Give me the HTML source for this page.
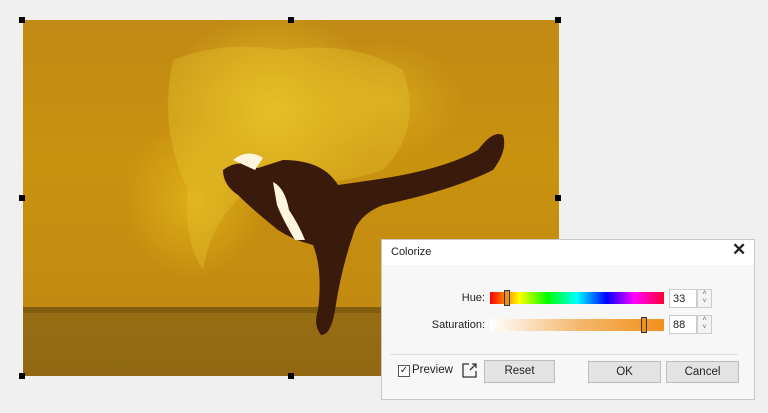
<!DOCTYPE html>
<html><head><style>
body{margin:0;width:768px;height:413px;background:#f0f0f0;position:relative;overflow:hidden;font-family:"Liberation Sans",sans-serif;}
.h{position:absolute;width:6px;height:6px;background:#000;}
#img{position:absolute;left:23px;top:20px;width:536px;height:356px;overflow:hidden;
background:
radial-gradient(ellipse 110px 100px at 250px 90px,rgba(240,205,40,.75),rgba(240,205,40,0)),
radial-gradient(ellipse 70px 80px at 170px 180px,rgba(235,195,30,.6),rgba(235,195,30,0)),
radial-gradient(ellipse 80px 60px at 360px 80px,rgba(230,190,35,.5),rgba(230,190,35,0)),
linear-gradient(180deg,#c08a14 0%,#c9920f 40%,#c28a10 80%,#a87410 100%);}
.dlg{position:absolute;left:381px;top:239px;width:372px;height:159px;background:#f7f7f7;border:1px solid #c8c8c8;font-size:11px;color:#222;}
.abs{position:absolute;}
.btn{position:absolute;background:#e3e3e3;border:1px solid #bdbdbd;text-align:center;line-height:20px;font-size:11.5px;}
.inp{position:absolute;background:#fff;border:1px solid #ccc;width:28px;height:19px;line-height:19px;padding-left:3px;box-sizing:border-box;font-size:11px;}
.spin{position:absolute;width:15px;height:19px;border:1px solid #ccc;background:#f3f3f3;box-sizing:border-box;font-size:7px;text-align:center;line-height:8px;color:#666;}
</style></head><body>
<div id="img">
<svg width="536" height="356" style="position:absolute;left:0;top:0">
<rect x="0" y="287" width="536" height="69" fill="#8a6414" opacity=".75"/>
<rect x="0" y="287" width="536" height="6" fill="#6b4d0c" opacity=".5"/>
<path d="M150 40 Q200 20 260 30 Q330 20 380 50 Q400 110 360 150 Q300 170 240 160 Q190 190 180 250 Q160 220 165 170 Q135 110 150 40Z" fill="#e8c630" opacity=".35"/>
<path d="M200 150 Q215 138 235 148 L260 140 Q300 140 315 165 L350 160 Q420 150 455 130 Q470 110 480 115 Q485 130 470 150 Q430 170 360 185 Q335 195 330 215 Q318 250 312 290 Q308 315 298 315 Q290 305 295 290 Q300 250 290 225 Q270 220 255 210 Q230 190 215 175 Q200 165 200 150Z" fill="#3a1a0a"/>
<path d="M250 162 Q262 168 266 190 Q276 205 282 220 L272 220 Q260 200 254 185Z" fill="#fff5e0"/>
<path d="M210 140 Q225 128 240 138 L232 150Z" fill="#fff5e0"/>
</svg>
</div>
<div class="h" style="left:19px;top:17px"></div><div class="h" style="left:288px;top:17px"></div><div class="h" style="left:555px;top:17px"></div>
<div class="h" style="left:19px;top:195px"></div><div class="h" style="left:555px;top:195px"></div>
<div class="h" style="left:19px;top:373px"></div><div class="h" style="left:288px;top:373px"></div>
<div class="dlg">
<div class="abs" style="left:0;top:0;width:372px;height:25px;background:#fff"></div>
<div class="abs" style="left:9px;top:6px;font-size:11px">Colorize</div>
<div class="abs" style="left:350px;top:0px;font-size:17px;font-weight:bold">✕</div>
<div class="abs" style="left:60px;top:52px;width:43px;text-align:right">Hue:</div>
<div class="abs" style="left:108px;top:52px;width:174px;height:12px;background:linear-gradient(90deg,#f00,#ff0 17%,#0f0 33%,#0ff 50%,#00f 67%,#f0f 83%,#f03)"></div>
<div class="abs" style="left:122px;top:50px;width:4px;height:14px;border:1px solid #333;background:#e89020"></div>
<div class="inp" style="left:287px;top:49px">33</div><div class="spin" style="left:315px;top:49px">˄<br>˅</div>
<div class="abs" style="left:20px;top:79px;width:83px;text-align:right">Saturation:</div>
<div class="abs" style="left:108px;top:79px;width:174px;height:12px;background:linear-gradient(90deg,#fff,#f5b870 50%,#f0901a)"></div>
<div class="abs" style="left:259px;top:77px;width:4px;height:14px;border:1px solid #333;background:#f0901a"></div>
<div class="inp" style="left:287px;top:75px">88</div><div class="spin" style="left:315px;top:75px">˄<br>˅</div>
<div class="abs" style="left:8px;top:114px;width:348px;height:1px;background:#ddd"></div>
<div class="abs" style="left:16px;top:125px;width:10px;height:10px;border:1px solid #555;background:#fff;font-size:10px;line-height:10px;text-align:center">✓</div>
<div class="abs" style="left:30px;top:124px;font-size:11.5px">Preview</div>
<svg class="abs" style="left:79px;top:122px" width="17" height="17"><path d="M8 2H2V15H15V9M9 8L15 2M11 2H15V6" fill="none" stroke="#333" stroke-width="1.3"/></svg>
<div class="btn" style="left:102px;top:120px;width:69px;height:21px">Reset</div>
<div class="btn" style="left:206px;top:121px;width:71px;height:20px">OK</div>
<div class="btn" style="left:284px;top:121px;width:71px;height:20px">Cancel</div>
</div>
</body></html>
